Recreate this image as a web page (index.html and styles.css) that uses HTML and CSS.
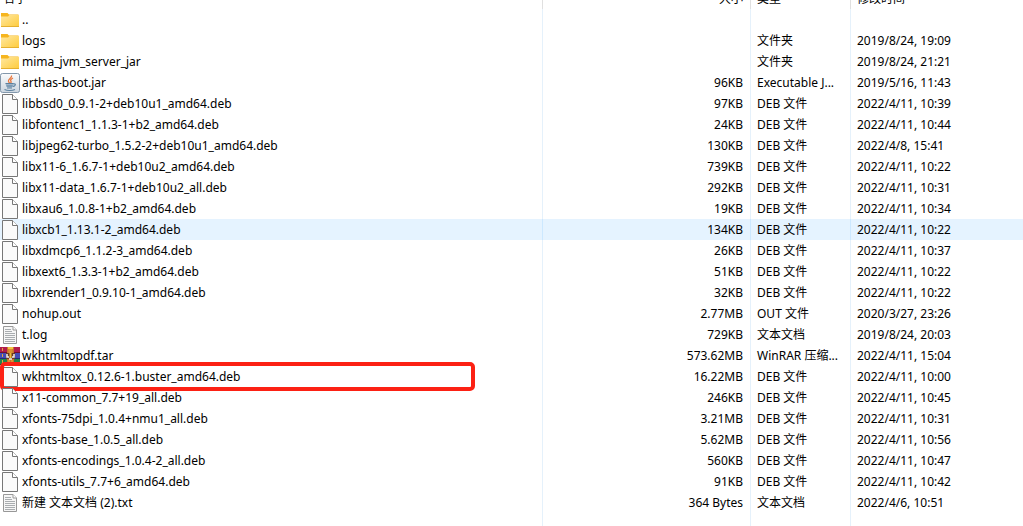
FILE: index.html
```html
<!DOCTYPE html>
<html lang="zh-CN">
<head>
<meta charset="utf-8">
<title>文件列表</title>
<link rel="stylesheet" href="styles.css">
</head>
<body>
<svg class="sprite" aria-hidden="true">
  <defs>
    <linearGradient id="gold" x1="0" y1="0" x2="1" y2="1"><stop offset="0" stop-color="#ffe8a0"/><stop offset="1" stop-color="#fecb3c"/></linearGradient>
    <linearGradient id="steel" x1="0" y1="0" x2="0" y2="1"><stop offset="0" stop-color="#fafbfc"/><stop offset="1" stop-color="#cbd5df"/></linearGradient>
    <symbol id="folder" viewBox="0 0 20 20">
      <path d="M1 3h6.500L9 4.500h9.500v11H1z" fill="#f6b51e"/>
      <path d="M1 6.500h7l1.500-1.500H19V17H1z" fill="url(#gold)"/>
      <path d="M1 16.500h18" stroke="#e5b030"/>
    </symbol>
    <symbol id="file" viewBox="0 0 20 20">
      <path d="M2.500 .5h10l5 5v14h-15z" fill="#fafafa" stroke="#777"/>
      <path d="M12.500 .5v5h5" fill="#fff" stroke="#777"/>
    </symbol>
    <symbol id="text" viewBox="0 0 20 20">
      <path d="M3.500 1.500h9.500l3.500 3.500v13.500H3.500z" fill="#f6f6f6" stroke="#989898"/>
      <path d="M13 1.500v3.500h3.500" fill="#fff" stroke="#989898"/>
      <path d="M5 4.500h6M5 6.500h7M5 8.500h10M5 10.500h10M5 12.500h10M5 14.500h10M5 16.500h10" stroke="#a9adb0"/>
    </symbol>
    <symbol id="java" viewBox="0 0 20 20">
      <rect x=".5" y=".5" width="19" height="19" rx="2" fill="url(#steel)" stroke="#8297ab"/>
      <path d="M11.500 2.500c1 2.500-4 3.500-3 6 .3.700.8 1 1 1.500M13 5c-2 1-3 2-2 3.500.5.700 0 1.200-.5 1.700" fill="none" stroke="#e9753a" stroke-width="1.300"/>
      <path d="M5.500 10.500h8v2c0 3-7 3-7.500 0z" fill="#9eb5c9"/>
      <path d="M5.500 10.500h8M13.500 11c3-.7 2 2.300-.5 2.500M6.500 13h6M7 15h5M4.500 16.500c2.500 1.300 8 1.300 10.500 0" fill="none" stroke="#5c819f" stroke-width="1.100"/>
    </symbol>
    <symbol id="rar" viewBox="0 0 20 20">
      <path d="M0 1h20v6H0z" fill="#b01c4b"/><path d="M0 7h20v6H0z" fill="#444cb4"/><path d="M0 13h20v6H0z" fill="#24834a"/>
      <path d="M0 6.500h20" stroke="#70102f"/><path d="M0 12.500h20" stroke="#242b73"/><path d="M0 18.500h20" stroke="#14532c"/>
      <path d="M2.500 2v3M2.500 8v3M2.500 14v3" stroke="#e2a83a"/>
      <path d="M7 1h7v18H7z" fill="#c8702a"/>
      <path d="M8 1h5v2H8z" fill="#f3c442"/>
      <path d="M8.500 4h4M8.500 6h4M9 14v5M12 14v5" stroke="#edb337"/>
      <path d="M6 7h9v6H6z" fill="#6c3a24"/>
      <path d="M7 8v3h2M14 8v3h-2M9 13h3" fill="none" stroke="#eee" stroke-width="1.500"/>
      <path d="M10.500 7v5" stroke="#f0ba35" stroke-width="2"/>
    </symbol>
  </defs>
</svg>
<table class="files">
  <colgroup><col class="col-name"><col class="col-size"><col class="col-type"><col></colgroup>
  <thead><tr><th>名字</th><th class="size">大小</th><th>类型</th><th>修改时间</th></tr></thead>
  <tbody id="rows"></tbody>
  <tfoot><tr><td></td><td></td><td></td><td></td></tr></tfoot>
</table>
<script src="files.js"></script>
</body>
</html>
```
FILE: styles.css
```css
body {
  margin: 0;
  overflow: hidden;
  background: #fff;
  color: #000;
  font-family: "Noto Sans", "Noto Sans CJK SC", sans-serif;
  font-size: 12px;
  line-height: 20px;
}

.sprite {
  position: absolute;
  width: 0;
  height: 0;
}

/* The list is scrolled up, so the header is mostly out of view. */
.files {
  width: 100%;
  margin-top: -15px;
  table-layout: fixed;
  border-collapse: separate;
  border-spacing: 0;
}

.col-name { width: 543px; }
.col-size { width: 208px; }
.col-type { width: 100px; }

th,
td {
  height: 21px;
  padding: 0 6px;
  border-right: 1px solid #e5f1fb;
  text-align: left;
  font-weight: normal;
  white-space: nowrap;
  overflow: hidden;
  text-overflow: ellipsis;
  box-sizing: border-box;
}

th {
  height: 24px;
  padding-top: 3px;
  border-color: #e0e0e0;
}

th:first-child { padding-left: 3px; }

th:last-child,
td:last-child { border-right: 0; }

.size { text-align: right; padding-right: 7px; }

.name {
  position: relative;
  padding-left: 0;
}

.label {
  display: flex;
  align-items: center;
  gap: 2px;
}

.icon {
  flex: none;
  width: 20px;
  height: 20px;
}

.hover td {
  background: #e5f3ff;
  border-color: #cce8ff;
}

.marked .name { overflow: visible; }

.marked .name::after {
  content: "";
  position: absolute;
  left: 0;
  top: -4px;
  width: 475px;
  height: 29px;
  border: 4px solid #fc2114;
  border-radius: 5px;
  box-sizing: border-box;
}
```
FILE: files.js
```js
const files = [
  ["folder", "..", "", "", ""],
  ["folder", "logs", "", "文件夹", "2019/8/24, 19:09"],
  ["folder", "mima_jvm_server_jar", "", "文件夹", "2019/8/24, 21:21"],
  ["java", "arthas-boot.jar", "96KB", "Executable J...", "2019/5/16, 11:43"],
  ["file", "libbsd0_0.9.1-2+deb10u1_amd64.deb", "97KB", "DEB 文件", "2022/4/11, 10:39"],
  ["file", "libfontenc1_1.1.3-1+b2_amd64.deb", "24KB", "DEB 文件", "2022/4/11, 10:44"],
  ["file", "libjpeg62-turbo_1.5.2-2+deb10u1_amd64.deb", "130KB", "DEB 文件", "2022/4/8, 15:41"],
  ["file", "libx11-6_1.6.7-1+deb10u2_amd64.deb", "739KB", "DEB 文件", "2022/4/11, 10:22"],
  ["file", "libx11-data_1.6.7-1+deb10u2_all.deb", "292KB", "DEB 文件", "2022/4/11, 10:31"],
  ["file", "libxau6_1.0.8-1+b2_amd64.deb", "19KB", "DEB 文件", "2022/4/11, 10:34"],
  ["file", "libxcb1_1.13.1-2_amd64.deb", "134KB", "DEB 文件", "2022/4/11, 10:22", "hover"],
  ["file", "libxdmcp6_1.1.2-3_amd64.deb", "26KB", "DEB 文件", "2022/4/11, 10:37"],
  ["file", "libxext6_1.3.3-1+b2_amd64.deb", "51KB", "DEB 文件", "2022/4/11, 10:22"],
  ["file", "libxrender1_0.9.10-1_amd64.deb", "32KB", "DEB 文件", "2022/4/11, 10:22"],
  ["file", "nohup.out", "2.77MB", "OUT 文件", "2020/3/27, 23:26"],
  ["text", "t.log", "729KB", "文本文档", "2019/8/24, 20:03"],
  ["rar", "wkhtmltopdf.tar", "573.62MB", "WinRAR 压缩...", "2022/4/11, 15:04"],
  ["file", "wkhtmltox_0.12.6-1.buster_amd64.deb", "16.22MB", "DEB 文件", "2022/4/11, 10:00", "marked"],
  ["file", "x11-common_7.7+19_all.deb", "246KB", "DEB 文件", "2022/4/11, 10:45"],
  ["file", "xfonts-75dpi_1.0.4+nmu1_all.deb", "3.21MB", "DEB 文件", "2022/4/11, 10:31"],
  ["file", "xfonts-base_1.0.5_all.deb", "5.62MB", "DEB 文件", "2022/4/11, 10:56"],
  ["file", "xfonts-encodings_1.0.4-2_all.deb", "560KB", "DEB 文件", "2022/4/11, 10:47"],
  ["file", "xfonts-utils_7.7+6_amd64.deb", "91KB", "DEB 文件", "2022/4/11, 10:42"],
  ["text", "新建 文本文档 (2).txt", "364 Bytes", "文本文档", "2022/4/6, 10:51"]
];

document.getElementById("rows").innerHTML = files.map(([icon, name, size, type, date, state = ""]) => `
  <tr class="${state}">
    <td class="name"><div class="label"><svg class="icon" aria-hidden="true"><use href="#${icon}"/></svg><span>${name}</span></div></td>
    <td class="size">${size}</td>
    <td>${type}</td>
    <td>${date}</td>
  </tr>`).join("");
```
